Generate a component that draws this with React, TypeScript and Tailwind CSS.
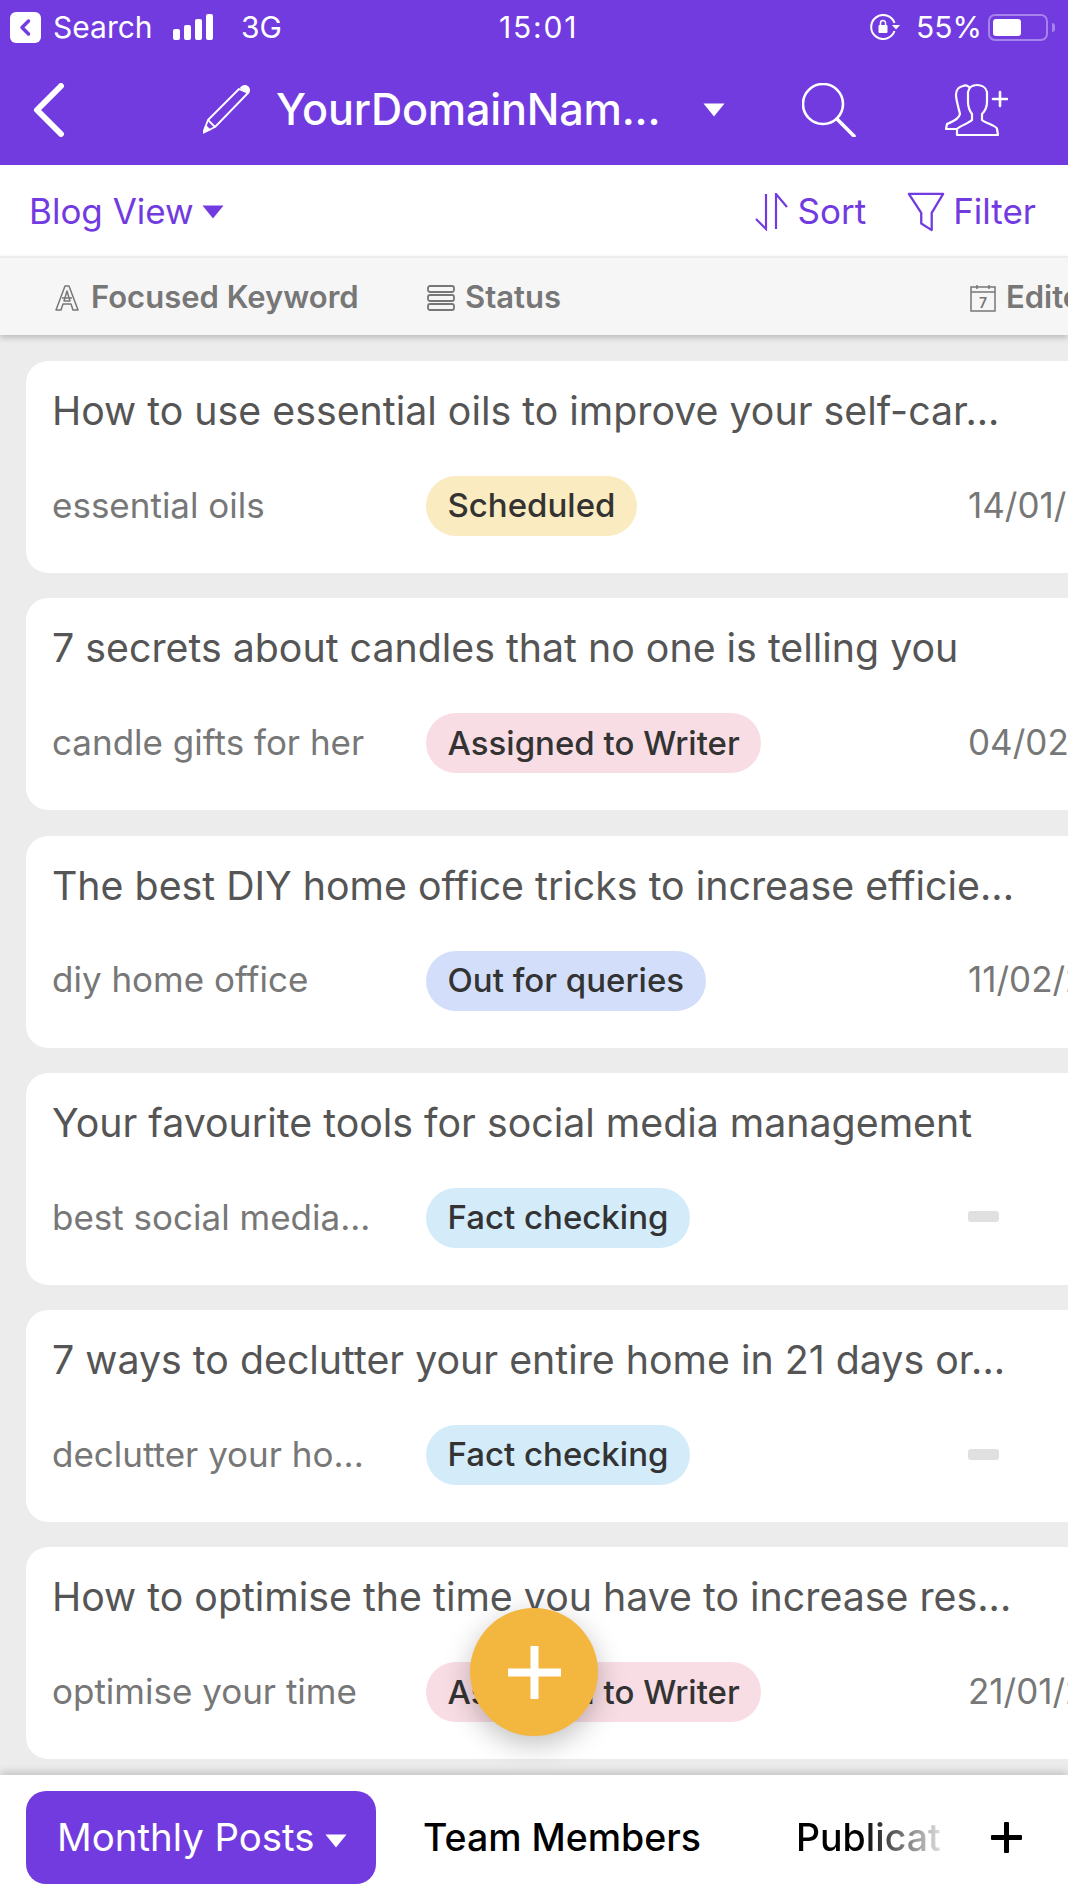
const font = { fontFamily: 'Inter, "Liberation Sans", sans-serif' };

const posts = [
  { title: 'How to use essential oils to improve your self-car...', keyword: 'essential oils', status: 'Scheduled', pill: 'bg-[#faecc0]', date: '14/01/2020' },
  { title: '7 secrets about candles that no one is telling you', keyword: 'candle gifts for her', status: 'Assigned to Writer', pill: 'bg-[#f9dde5]', date: '04/02/2020' },
  { title: 'The best DIY home office tricks to increase efficie...', keyword: 'diy home office', status: 'Out for queries', pill: 'bg-[#d3dffa]', date: '11/02/2020' },
  { title: 'Your favourite tools for social media management', keyword: 'best social media...', status: 'Fact checking', pill: 'bg-[#d4ecfa]', date: '' },
  { title: '7 ways to declutter your entire home in 21 days or...', keyword: 'declutter your ho...', status: 'Fact checking', pill: 'bg-[#d4ecfa]', date: '' },
  { title: 'How to optimise the time you have to increase res...', keyword: 'optimise your time', status: 'Assigned to Writer', pill: 'bg-[#f9dde5]', date: '21/01/2020' },
];

const Caret = ({ className }: { className: string }) => (
  <svg viewBox="0 0 22 14" className={className} fill="currentColor">
    <path d="M0.5 0.5h21L11 13.5z" />
  </svg>
);

const StatusBar = () => (
  <div className="flex items-center h-[54px] text-white text-[30px] relative">
    <svg viewBox="0 0 31 31" className="w-[31px] h-[31px] ml-[10px] mt-[1px]">
      <rect width="31" height="31" rx="6" fill="#fff" />
      <path d="M18.500 9l-6.500 6.500 6.500 6.500" fill="none" stroke="#723bdf" strokeWidth="3.500" strokeLinecap="round" strokeLinejoin="round" />
    </svg>
    <span className="ml-[12px] w-[98px]">Search</span>
    <svg viewBox="0 0 41 26" className="w-[41px] h-[26px] ml-[22px]" fill="#fff">
      <rect x="0" y="15" width="7" height="11" rx="2" />
      <rect x="11" y="11" width="7" height="15" rx="2" />
      <rect x="22" y="5" width="7" height="21" rx="2" />
      <rect x="33" y="0" width="7" height="26" rx="2" />
    </svg>
    <span className="ml-[27px]">3G</span>
    <span className="absolute left-[499px] tracking-[1.8px]">15:01</span>
    <div className="ml-auto flex items-center">
      <svg viewBox="0 0 30 26" className="w-[30px] h-[26px]" fill="none" stroke="#fff" strokeWidth="2">
        <path d="M24.500 17a12 12 0 1 1 0-8" />
        <path d="M22 11h8l-4 4.500z" fill="#fff" stroke="none" />
        <rect x="8.500" y="11" width="9" height="8" rx="1" fill="#fff" stroke="none" />
        <path d="M10.500 11V9a2.500 2.500 0 0 1 5 0v2" strokeWidth="1.500" />
      </svg>
      <span className="ml-[16px]">55%</span>
      <div className="ml-[6px] w-[60px] h-[27px] rounded-[7px] border-2 border-[#a583ea] p-[3px]">
        <div className="w-[28px] h-full bg-white rounded-[3px]" />
      </div>
      <div className="w-[3px] h-[9px] bg-[#a583ea] rounded-r-full ml-[4px] mr-[13px]" />
    </div>
  </div>
);

const NavBar = () => (
  <div className="flex items-center h-[111px] text-white">
    <svg viewBox="0 0 32 54" className="w-[32px] h-[54px] ml-[33px]" fill="none" stroke="#fff" strokeWidth="6" strokeLinecap="round" strokeLinejoin="round">
      <path d="M28 3L4 27l24 24" />
    </svg>
    <svg viewBox="8 10 50 50" className="w-[50px] h-[50px] ml-[138px]" fill="none" stroke="#fff" strokeWidth="1.800" strokeLinejoin="round">
      <path d="M8 58l5-13 31-31 9 4-33 34z" />
      <path d="M13 45l7 7" />
      <path d="M46 13a4 4 0 0 1 7.500 4.500z" fill="#fff" />
      <path d="M8 58l3-8 5 5z" fill="#fff" stroke="none" />
    </svg>
    <span className="ml-[23px] text-[43.2px] font-medium w-[427px] shrink-0 whitespace-nowrap tracking-[-0.2px]">YourDomainNam...</span>
    <Caret className="w-[22px] h-[14px] shrink-0" />
    <svg viewBox="0 0 54 54" className="w-[54px] h-[54px] ml-[77px] shrink-0" fill="none" stroke="#fff" strokeWidth="2.600" strokeLinecap="round">
      <circle cx="21" cy="21" r="20" />
      <path d="M35 36l17 17" strokeWidth="3.600" />
    </svg>
    <svg viewBox="10 11 63 54" className="w-[63px] h-[54px] ml-[89px] shrink-0" fill="none" stroke="#fff" strokeWidth="2.200" strokeLinejoin="round" strokeLinecap="round">
      <path d="M34 15c-2-2-4-2-6-1-5 1-7 4-7 9 0 4 1 7 4 19-1 4-4 6-13 10l-1 5h11" />
      <path d="M22 63v-6c1-2 12-6 15-9v-6c-3-4-4-8-4-12V20c1-5 5-7 9-7s9 2 10 7v10c0 4-1 8-5 12v6c3 3 15 6 15 9l1 6z" />
      <path d="M65 20v14M58 27h14" strokeWidth="2.600" />
    </svg>
  </div>
);

const Toolbar = () => (
  <div className="flex items-center h-[91px] bg-white text-[#723bdf] text-[35px] pt-[2px]">
    <span className="ml-[29px]">Blog View</span>
    <Caret className="w-[22px] h-[14px] ml-[8px]" />
    <svg viewBox="0 0 33 38" className="w-[33px] h-[38px] ml-auto" fill="none" stroke="currentColor" strokeWidth="2.200">
      <path d="M11 1v35L1 26" />
      <path d="M21 36V1l11 13" />
    </svg>
    <span className="ml-[10px]">Sort</span>
    <svg viewBox="0 0 40 42" className="w-[40px] h-[40px] ml-[40px]" fill="none" stroke="currentColor" strokeWidth="2.400" strokeLinejoin="round">
      <path d="M2 2h36L26 22v18l-11-7V22z" />
    </svg>
    <span className="ml-[7px] mr-[32px]">Filter</span>
  </div>
);

const ColumnHead = () => (
  <div className="flex items-center h-[79px] pt-[2px] bg-[#f6f6f6] border-t-2 border-[#ececec] text-[#777] text-[31px] font-semibold shadow-[0_3px_6px_rgba(0,0,0,0.2)] relative overflow-hidden">
    <svg viewBox="0 0 24 28" className="w-[24px] h-[28px] ml-[55px] shrink-0" fill="none" stroke="currentColor" strokeWidth="1.500" strokeLinejoin="round">
      <path d="M1 26L10 2h4l9 24h-5l-2-6H8l-2 6z" />
      <path d="M12 7l-3 10h6z" />
      <path d="M7 14h10" />
    </svg>
    <span className="ml-[12px] w-[336px] shrink-0 whitespace-nowrap">Focused Keyword</span>
    <svg viewBox="0 0 28 26" className="w-[28px] h-[26px] shrink-0" fill="none" stroke="currentColor" strokeWidth="1.800">
      <rect x="1" y="1" width="26" height="6" rx="2" />
      <rect x="1" y="10" width="26" height="6" rx="2" />
      <rect x="1" y="19" width="26" height="6" rx="2" />
    </svg>
    <span className="ml-[10px] w-[505px] shrink-0">Status</span>
    <svg viewBox="0 0 26 28" className="w-[26px] h-[28px] shrink-0" fill="none" stroke="currentColor" strokeWidth="1.500">
      <rect x="1" y="3" width="24" height="24" />
      <path d="M1 8h24M7 1v4M19 1v4" />
      <text x="13" y="24" fontSize="14" textAnchor="middle" fill="currentColor" stroke="none">7</text>
    </svg>
    <span className="ml-[10px] shrink-0">Editor</span>
  </div>
);

const PostCard = ({ post }: { post: typeof posts[number] }) => (
  <div className="w-[1200px] h-[212px] shrink-0 bg-white rounded-[22px] pl-[26px] pt-[26px]">
    <div className="text-[39.3px] leading-[48px] text-[#555] whitespace-nowrap">{post.title}</div>
    <div className="flex items-center mt-[40px] h-[60px] text-[35px] text-[#777] whitespace-nowrap">
      <span className="w-[374px] shrink-0">{post.keyword}</span>
      <div className="w-[542px] shrink-0 flex">
        <span className={`flex items-center h-[60px] mt-[2px] rounded-[30px] px-[21.5px] text-[33px] font-medium text-[#333] ${post.pill}`}>{post.status}</span>
      </div>
      {post.date ? <span>{post.date}</span> : <span className="w-[31px] h-[11px] rounded-[3px] bg-[#e0e0e0]" />}
    </div>
  </div>
);

const App = () => (
  <div style={font} className="relative w-[1068px] h-[1899px] overflow-hidden flex flex-col bg-[#ececec]">
    <div className="bg-[#723bdf] shrink-0">
      <StatusBar />
      <NavBar />
    </div>
    <Toolbar />
    <ColumnHead />
    <div className="flex-1 min-h-0 overflow-hidden flex flex-col gap-[25.3px] pl-[26px] pt-[26px]">
      {posts.map((post) => (
        <PostCard key={post.title} post={post} />
      ))}
    </div>
    <div className="h-[124px] shrink-0 bg-white flex items-center relative shadow-[0_-3px_8px_rgba(0,0,0,0.18)] text-[37.5px] font-medium text-black">
      <div className="ml-[26px] w-[350px] h-[93px] pt-[2px] shrink-0 rounded-[20px] bg-[#723bdf] text-white flex items-center pl-[31px] text-[38.4px] font-normal whitespace-nowrap">
        <span>Monthly Posts</span>
        <Caret className="w-[22px] h-[14px] ml-[10px] mt-[6px]" />
      </div>
      <span className="ml-[47px] mt-[2px] w-[373px] shrink-0 whitespace-nowrap">Team Members</span>
      <span className="w-[144px] mt-[2px] shrink-0 overflow-hidden whitespace-nowrap bg-[linear-gradient(90deg,#000_45%,#ddd_100%)] bg-clip-text text-transparent">Publicat</span>
      <svg viewBox="0 0 31 31" className="w-[31px] h-[31px] ml-[51px] shrink-0" fill="#000">
        <rect x="13" y="0" width="5" height="31" rx="1" />
        <rect x="0" y="13" width="31" height="5" rx="1" />
      </svg>
    </div>
    <div className="absolute left-[470px] top-[1608px] w-[128px] h-[128px] rounded-full bg-[#f3b73f] shadow-[0_8px_28px_rgba(0,0,0,0.25)] flex items-center justify-center">
      <svg viewBox="0 0 53 53" className="w-[53px] h-[53px]" fill="#fff">
        <rect x="22.500" y="0" width="8" height="53" />
        <rect x="0" y="22.500" width="53" height="8" />
      </svg>
    </div>
  </div>
);

export default App;
